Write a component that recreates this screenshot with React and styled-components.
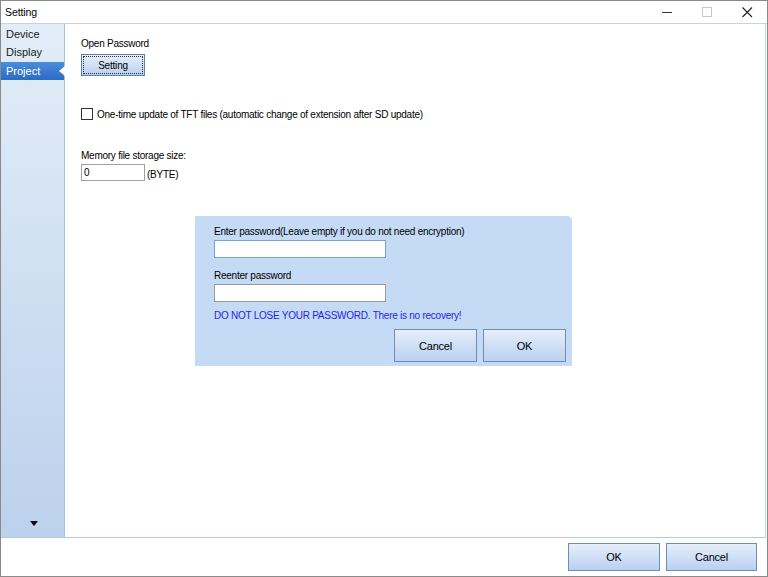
import React from "react";
import styled, { createGlobalStyle } from "styled-components";

const Global = createGlobalStyle`
  html, body { margin: 0; padding: 0; background: #fff; }
  body { font-family: "Liberation Sans", Arial, sans-serif; font-size: 10px; letter-spacing: -0.25px; color: #000; }
  * { box-sizing: border-box; }
`;

const Window = styled.div`
  width: 768px;
  height: 577px;
  border: 1px solid #8a8a8a;
  display: flex;
  flex-direction: column;
  background: #fff;
  overflow: hidden;
`;

const TitleBar = styled.div`
  height: 23px;
  flex: none;
  display: flex;
  align-items: center;
  border-bottom: 1px solid #c9d3de;
  padding-left: 4px;
`;

const Title = styled.div`
  flex: 1;
  font-size: 10.5px;
  letter-spacing: -0.1px;
`;

const WinButton = styled.div`
  width: 40px;
  height: 22px;
  display: flex;
  align-items: center;
  justify-content: center;
`;

const Body = styled.div`
  flex: 1;
  display: flex;
  border-right: 1px solid #c6d3e2;
  border-bottom: 1px solid #b9c9dc;
  margin-right: 1px;
  min-height: 0;
`;

const Sidebar = styled.div`
  width: 64px;
  flex: none;
  background: linear-gradient(#e3edf8, #bcd1ec);
  border-right: 1px solid #aac0da;
  display: flex;
  flex-direction: column;
  padding-top: 0.5px;
`;

const NavItem = styled.div`
  position: relative;
  height: 18.5px;
  line-height: 18.5px;
  padding-left: 5px;
  font-size: 11px;
  letter-spacing: 0;
  color: ${p => (p.$active ? "#fff" : "#1a1a1a")};
  background: ${p => (p.$active ? "linear-gradient(#4b8ddc, #2d6bc4)" : "transparent")};
`;

const Pointer = styled.div`
  position: absolute;
  right: -1px;
  top: 4px;
  width: 0;
  height: 0;
  border-top: 5px solid transparent;
  border-bottom: 5px solid transparent;
  border-right: 6px solid #fff;
`;

const SideSpacer = styled.div`
  flex: 1;
`;

const SideArrow = styled.div`
  height: 16px;
  display: flex;
  justify-content: center;
  padding-left: 2px;
`;

const Main = styled.div`
  flex: 1;
  padding: 14px 0 0 16px;
  display: flex;
  flex-direction: column;
`;

const Label = styled.div`
  color: ${p => p.$color || "#000"};
  line-height: 12px;
  height: 12px;
  white-space: nowrap;
`;

const FocusButton = styled.button`
  margin-top: 4px;
  width: 64px;
  height: 22px;
  border: 1px solid #5f7fa8;
  background: linear-gradient(#e8f0fb, #b8cff0);
  font-family: inherit;
  font-size: 10px;
  letter-spacing: -0.2px;
  padding: 0;
  outline: 1px dotted #333;
  outline-offset: -3px;
`;

const CheckRow = styled.label`
  margin-top: 32px;
  height: 12px;
  display: flex;
  align-items: center;
  gap: 4px;
  white-space: nowrap;
`;

const Check = styled.span`
  width: 12px;
  height: 12px;
  border: 1px solid #333;
  background: #fff;
  display: inline-block;
  flex: none;
`;

const MemLabel = styled(Label)`
  margin-top: 30px;
`;

const InputRow = styled.div`
  display: flex;
  align-items: flex-end;
  gap: 2px;
  margin-top: 2px;
`;

const Input = styled.div`
  width: ${p => p.$w}px;
  height: ${p => p.$h || 17}px;
  background: #fff;
  border: 1px solid ${p => p.$border || "#a0a0a0"};
  padding: 1px 2px;
  line-height: 13px;
`;

const Unit = styled.span`
  line-height: 12px;
`;

const Panel = styled.div`
  margin-top: 35px;
  margin-left: 114px;
  width: 377px;
  height: 150px;
  background: #c4daf5;
  border-top-right-radius: 5px;
  padding: 10px 6px 0 19px;
  display: flex;
  flex-direction: column;
`;

const PanelLabel = styled(Label)`
  margin-top: ${p => p.$mt || 0}px;
  margin-bottom: 2px;
`;

const PanelButtons = styled.div`
  display: flex;
  justify-content: flex-end;
  gap: 6px;
  margin-top: 5px;
`;

const Button = styled.button`
  width: ${p => p.$w}px;
  height: ${p => p.$h}px;
  border: 1px solid #6f8cb3;
  background: linear-gradient(#e6effb, #b9d0f0);
  font-family: inherit;
  font-size: 11px;
  letter-spacing: -0.2px;
  padding: 0;
  color: #000;
`;

const Footer = styled.div`
  height: 38px;
  flex: none;
  display: flex;
  justify-content: flex-end;
  align-items: center;
  gap: 6px;
  padding-right: 10px;
  padding-bottom: 1px;
`;

export default function App() {
  return (
    <>
      <Global />
      <Window>
        <TitleBar>
          <Title>Setting</Title>
          <WinButton>
            <svg width="11" height="11" viewBox="0 0 11 11">
              <line x1="0" y1="5.5" x2="10" y2="5.5" stroke="#333" strokeWidth="1" />
            </svg>
          </WinButton>
          <WinButton>
            <svg width="11" height="11" viewBox="0 0 11 11">
              <rect x="0.5" y="0.5" width="9" height="9" fill="none" stroke="#c8c8c8" strokeWidth="1" />
            </svg>
          </WinButton>
          <WinButton>
            <svg width="11" height="11" viewBox="0 0 11 11">
              <path d="M0.5 0.5 L10 10 M10 0.5 L0.5 10" stroke="#222" strokeWidth="1.1" fill="none" />
            </svg>
          </WinButton>
        </TitleBar>
        <Body>
          <Sidebar>
            <NavItem>Device</NavItem>
            <NavItem>Display</NavItem>
            <NavItem $active>
              Project
              <Pointer />
            </NavItem>
            <SideSpacer />
            <SideArrow>
              <svg width="8" height="6" viewBox="0 0 8 6">
                <path d="M0 0 H8 L4 5 Z" fill="#000" />
              </svg>
            </SideArrow>
          </Sidebar>
          <Main>
            <Label>Open Password</Label>
            <FocusButton>Setting</FocusButton>
            <CheckRow>
              <Check />
              One-time update of TFT files (automatic change of extension after SD update)
            </CheckRow>
            <MemLabel>Memory file storage size:</MemLabel>
            <InputRow>
              <Input $w={64}>0</Input>
              <Unit>(BYTE)</Unit>
            </InputRow>
            <Panel>
              <PanelLabel>Enter password(Leave empty if you do not need encryption)</PanelLabel>
              <Input $w={172} $h={18} $border="#7aa3d6" />
              <PanelLabel $mt={12}>Reenter password</PanelLabel>
              <Input $w={172} $h={18} $border="#9a9a9a" />
              <PanelLabel $mt={8} $color="#2424e6">DO NOT LOSE YOUR PASSWORD. There is no recovery!</PanelLabel>
              <PanelButtons>
                <Button $w={83} $h={33}>Cancel</Button>
                <Button $w={83} $h={33}>OK</Button>
              </PanelButtons>
            </Panel>
          </Main>
        </Body>
        <Footer>
          <Button $w={92} $h={28}>OK</Button>
          <Button $w={91} $h={28}>Cancel</Button>
        </Footer>
      </Window>
    </>
  );
}
